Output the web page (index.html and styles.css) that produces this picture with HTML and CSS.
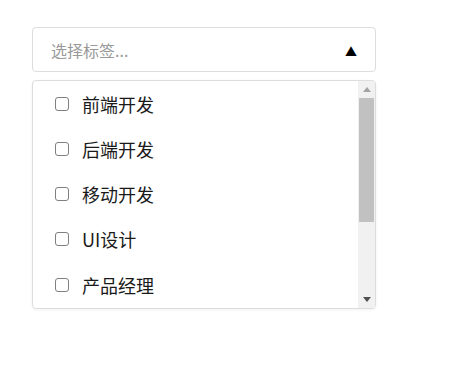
FILE: index.html
```html
<!DOCTYPE html>
<html lang="zh-CN">
<head>
    <meta charset="UTF-8">
    <meta name="viewport" content="width=device-width, initial-scale=1.0">
    <title>标签选择</title>
    <link rel="stylesheet" href="styles.css">
</head>
<body>
    <div class="tag-select">
        <div class="select-box">
            <span class="placeholder">选择标签...</span>
            <span class="arrow">▲</span>
        </div>
        <div class="options">
            <div class="option-list">
                <label class="option"><input type="checkbox"> <span>前端开发</span></label>
                <label class="option"><input type="checkbox"> <span>后端开发</span></label>
                <label class="option"><input type="checkbox"> <span>移动开发</span></label>
                <label class="option"><input type="checkbox"> <span>UI设计</span></label>
                <label class="option"><input type="checkbox"> <span>产品经理</span></label>
            </div>
            <div class="scrollbar">
                <div class="scroll-btn">
                    <svg width="8" height="5" viewBox="0 0 8 5"><path d="M0 5h8L4 0z" fill="#a3a3a3"/></svg>
                </div>
                <div class="scroll-track">
                    <div class="scroll-thumb"></div>
                </div>
                <div class="scroll-btn">
                    <svg width="8" height="5" viewBox="0 0 8 5"><path d="M0 0h8L4 5z" fill="#505050"/></svg>
                </div>
            </div>
        </div>
    </div>
</body>
</html>
```

FILE: styles.css
```css
body {
    margin: 0;
    padding: 27px 32px;
    font-family: "Noto Sans CJK SC", "Noto Sans", sans-serif;
    background: #fff;
    color: #1a1a1a;
}
.tag-select {
    width: 344px;
}
.select-box {
    height: 45px;
    box-sizing: border-box;
    border: 1px solid #ddd;
    border-radius: 4px;
    display: flex;
    align-items: center;
    justify-content: space-between;
    padding: 0 18px;
    cursor: pointer;
}
.placeholder {
    color: #999;
    font-size: 16px;
}
.arrow {
    font-size: 12px;
    color: #000;
    margin-top: 4px;
}
.options {
    margin-top: 8px;
    border: 1px solid #ddd;
    border-radius: 4px;
    display: flex;
    height: 229px;
    box-sizing: border-box;
    overflow: hidden;
    box-shadow: 0 1px 3px rgba(0, 0, 0, 0.06);
}
.option-list {
    flex: 1;
}
.option {
    display: flex;
    align-items: center;
    height: 45.25px;
    padding: 0 22px;
    font-size: 18px;
    cursor: pointer;
}
.option input {
    appearance: none;
    -webkit-appearance: none;
    box-sizing: border-box;
    flex: none;
    margin: 0 13px 0 0;
    width: 14px;
    height: 14px;
    border: 1px solid #808080;
    border-radius: 3px;
    background: #fff;
}
.scrollbar {
    width: 17px;
    background: #f1f1f1;
    display: flex;
    flex-direction: column;
}
.scroll-btn {
    height: 17px;
    display: flex;
    align-items: center;
    justify-content: center;
}
.scroll-track {
    flex: 1;
    padding: 0 1px;
}
.scroll-thumb {
    height: 124px;
    background: #c1c1c1;
}
```
